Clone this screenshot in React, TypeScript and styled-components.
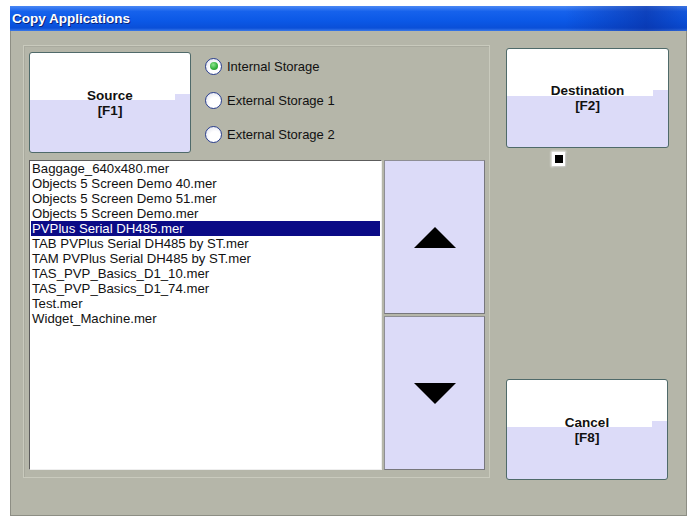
import React, { useState } from "react";
import styled, { createGlobalStyle } from "styled-components";

const GlobalStyle = createGlobalStyle`
	* {
		box-sizing: border-box;
	}
	body {
		margin: 0;
		background: #ffffff;
		font-family: "Liberation Sans", Arial, sans-serif;
	}
`;

const LAVENDER = "#dcdbf8";

const Page = styled.div`
	padding: 6px 0 0 10px;
`;

const Window = styled.div`
	width: 677px;
	height: 510px;
	display: flex;
	flex-direction: column;
	background: #b5b6a9;
	border: 1px solid #8d8e84;
	border-top: none;
`;

const TitleBar = styled.div`
	height: 25px;
	margin: 0 -1px;
	display: flex;
	align-items: center;
	padding-left: 2px;
	background:
		linear-gradient(to right, rgba(8, 40, 150, 0) 82%, rgba(8, 40, 150, 0.55) 94%, rgba(8, 40, 150, 0.2) 100%),
		linear-gradient(to bottom, #4a88f4 0%, #1662ec 22%, #0b58e6 60%, #0a4fd8 88%, #3a78e8 100%);
	color: #ffffff;
	font-size: 13.5px;
	font-weight: bold;
	text-shadow: 1px 1px 0 #0b237a;
`;

const Body = styled.div`
	flex: 1;
	display: flex;
	align-items: flex-start;
	padding: 14px 0 0 12px;
	gap: 16px;
`;

const GroupPanel = styled.div`
	width: 467px;
	height: 433px;
	display: flex;
	flex-direction: column;
	gap: 7px;
	padding: 6px 4px 7px 5px;
	border: 1px solid #c9cabd;
	box-shadow: inset 1px 1px 0 #a9aa9e;
`;

const TopRow = styled.div`
	display: flex;
	gap: 14px;
`;

const BottomRow = styled.div`
	flex: 1;
	display: flex;
	gap: 2px;
`;

const FunctionButton = styled.button<{ $w: number; $h: number }>`
	width: ${p => p.$w}px;
	height: ${p => p.$h}px;
	flex: none;
	display: flex;
	flex-direction: column;
	align-items: center;
	justify-content: center;
	padding: 0;
	border: 1px solid #4f6a6a;
	border-radius: 3px;
	background:
		linear-gradient(to bottom, #ffffff 41.5%, ${LAVENDER} 41.5%) right top / 15px 100% no-repeat,
		linear-gradient(to bottom, #ffffff 47.5%, ${LAVENDER} 47.5%);
	font-family: "Liberation Sans", Arial, sans-serif;
	font-size: 13.5px;
	font-weight: bold;
	line-height: 15px;
	color: #111111;
	cursor: pointer;
`;

const RadioGroup = styled.div`
	display: flex;
	flex-direction: column;
	gap: 16px;
	padding-top: 5px;
`;

const RadioRow = styled.label`
	height: 18px;
	display: flex;
	align-items: center;
	gap: 5px;
	font-size: 13px;
	color: #111111;
	cursor: pointer;
`;

const RadioCircle = styled.span<{ $on: boolean }>`
	width: 17px;
	height: 17px;
	border-radius: 50%;
	border: 1.5px solid #2a3f8f;
	background: radial-gradient(circle at 60% 65%, #ffffff 40%, #d9dcea 100%);
	display: flex;
	align-items: center;
	justify-content: center;
	&::after {
		content: "";
		display: ${p => (p.$on ? "block" : "none")};
		width: 8px;
		height: 8px;
		border-radius: 50%;
		background: radial-gradient(circle at 40% 35%, #8fe58f 0%, #35b33f 55%, #1f8a2a 100%);
	}
`;

const ListBox = styled.div`
	width: 353px;
	padding: 0 1px;
	background: #ffffff;
	border: 1px solid;
	border-color: #5c5c5c #eeeeee #eeeeee #5c5c5c;
	overflow: hidden;
`;

const ListItem = styled.div<{ $selected: boolean }>`
	height: 15px;
	line-height: 15px;
	padding-left: 1px;
	font-size: 13.2px;
	white-space: nowrap;
	color: ${p => (p.$selected ? "#ffffff" : "#111111")};
	background: ${p => (p.$selected ? "#0b0b86" : "transparent")};
	cursor: default;
`;

const ScrollColumn = styled.div`
	flex: 1;
	display: flex;
	flex-direction: column;
	gap: 2px;
`;

const ScrollButton = styled.button`
	flex: 1;
	display: flex;
	align-items: center;
	justify-content: center;
	padding: 0;
	background: ${LAVENDER};
	border: 1px solid #8e8e94;
	border-right-color: #77777c;
	border-bottom-color: #77777c;
	cursor: pointer;
`;

const RightColumn = styled.div`
	display: flex;
	flex-direction: column;
	padding-top: 3px;
`;

const Indicator = styled.div`
	width: 13px;
	height: 14px;
	margin: 4px 0 0 46px;
	display: flex;
	align-items: center;
	justify-content: center;
	background: #ffffff;
	box-shadow: 0 0 2px 1px rgba(255, 255, 255, 0.8), 1px 1px 2px rgba(0, 0, 0, 0.35);
	&::after {
		content: "";
		width: 8px;
		height: 8px;
		background: #000000;
	}
`;

const CancelSlot = styled.div`
	margin-top: 213px;
`;

const Arrow = ({ down }: { down?: boolean }) => (
	<svg width="42" height="21" viewBox="0 0 42 21">
		<polygon points={down ? "0,0 42,0 21,21" : "21,0 42,21 0,21"} fill="#000000" />
	</svg>
);

const files = [
	"Baggage_640x480.mer",
	"Objects 5 Screen Demo 40.mer",
	"Objects 5 Screen Demo 51.mer",
	"Objects 5 Screen Demo.mer",
	"PVPlus Serial DH485.mer",
	"TAB PVPlus Serial DH485 by ST.mer",
	"TAM PVPlus Serial DH485 by ST.mer",
	"TAS_PVP_Basics_D1_10.mer",
	"TAS_PVP_Basics_D1_74.mer",
	"Test.mer",
	"Widget_Machine.mer",
];

const storages = ["Internal Storage", "External Storage 1", "External Storage 2"];

export default function App() {
	const [storage, setStorage] = useState(0);
	const [selected, setSelected] = useState(4);

	return (
		<Page>
			<GlobalStyle />
			<Window>
				<TitleBar>Copy Applications</TitleBar>
				<Body>
					<GroupPanel>
						<TopRow>
							<FunctionButton $w={162} $h={101}>
								<span>Source</span>
								<span>[F1]</span>
							</FunctionButton>
							<RadioGroup>
								{storages.map((name, i) => (
									<RadioRow key={name} onClick={() => setStorage(i)}>
										<RadioCircle $on={storage === i} />
										{name}
									</RadioRow>
								))}
							</RadioGroup>
						</TopRow>
						<BottomRow>
							<ListBox>
								{files.map((f, i) => (
									<ListItem key={f} $selected={selected === i} onClick={() => setSelected(i)}>
										{f}
									</ListItem>
								))}
							</ListBox>
							<ScrollColumn>
								<ScrollButton onClick={() => setSelected(s => Math.max(0, s - 1))}>
									<Arrow />
								</ScrollButton>
								<ScrollButton onClick={() => setSelected(s => Math.min(files.length - 1, s + 1))}>
									<Arrow down />
								</ScrollButton>
							</ScrollColumn>
						</BottomRow>
					</GroupPanel>
					<RightColumn>
						<FunctionButton $w={163} $h={100}>
							<span>Destination</span>
							<span>[F2]</span>
						</FunctionButton>
						<Indicator />
						<CancelSlot>
							<FunctionButton $w={162} $h={101}>
								<span>Cancel</span>
								<span>[F8]</span>
							</FunctionButton>
						</CancelSlot>
					</RightColumn>
				</Body>
			</Window>
		</Page>
	);
}
